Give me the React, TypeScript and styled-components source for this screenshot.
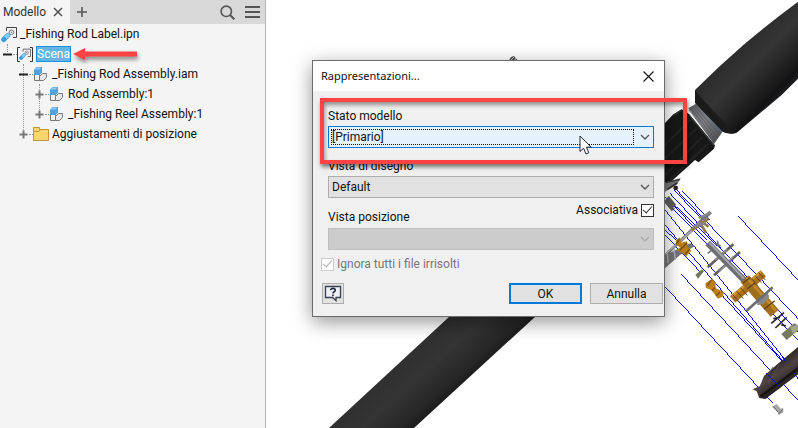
import React from "react";
import styled, { createGlobalStyle, css } from "styled-components";

const GlobalStyle = createGlobalStyle`
  *, *::before, *::after { box-sizing: border-box; }
  body { margin: 0; background: #fff; }
  body, button, select, input {
    font-family: Roboto, "Noto Sans", sans-serif;
    font-size: 12px;
    line-height: 16px;
    color: #111;
  }
  button, select { margin: 0; padding: 0; }
`;

const Page = styled.div`
  display: grid;
  grid-template-columns: 266px 1fr;
  min-height: 100vh;
  overflow: hidden;
`;

const Sidebar = styled.aside`
  background: #f4f4f4;
  border-right: 1px solid #b4b4b4;
`;

const TabBar = styled.header`
  display: flex;
  align-items: center;
  height: 24px;
  background: #d9d9d9;
`;

const Tab = styled.div`
  display: flex;
  align-items: center;
  justify-content: space-between;
  align-self: stretch;
  width: 70px;
  padding: 0 7px 0 3px;
  background: #f4f4f4;
  color: #333;
`;

const IconButton = styled.button`
  display: flex;
  border: 0;
  background: none;
  color: #555;
`;

const BarTools = styled.div`
  display: flex;
  flex: 1;
  align-items: center;
  gap: 10px;
  padding: 0 5px 0 7px;

  & > :nth-child(2) { margin-left: auto; }
`;

const Tree = styled.ul`
  margin: 0;
  padding: 0;
  list-style: none;
`;

const Branch = styled.ul<{ $root?: boolean }>`
  position: relative;
  margin: 0;
  padding: 0 0 0 ${(p) => (p.$root ? "0" : "16px")};
  list-style: none;

  &::before {
    content: "";
    position: absolute;
    top: 0;
    left: ${(p) => (p.$root ? "7px" : "23px")};
    ${(p) => (p.$root ? "height: 8px;" : "bottom: 10px;")}
    border-left: 1px dotted #999;
  }
`;

const Row = styled.div`
  display: flex;
  align-items: center;
  height: 20px;
  white-space: nowrap;
`;

const RootRow = styled(Row)`
  gap: 2px;
  padding-left: 1px;
`;

const Expander = styled.button`
  position: relative;
  display: flex;
  width: 13px;
  padding-left: 3px;
  border: 0;
  background: none;
`;

const Link = styled.span`
  width: 4px;
  border-top: 1px dotted #999;
`;

const Glyph = styled.span`
  display: flex;
  width: 17px;
  margin-right: 2px;
`;

const Name = styled.span<{ $selected?: boolean }>`
  ${(p) =>
    p.$selected &&
    css`
      margin-right: 1px;
      border: 1px solid #1c92dc;
      background: #62b5e5;
      color: #fff;
      line-height: 14px;
    `}
`;

const Pointer = styled.svg`
  overflow: visible;
  filter: drop-shadow(1px 3px 2px rgba(0, 0, 0, 0.45));
`;

const Canvas = styled.main`
  position: relative;
  overflow: hidden;
  background: #fff;
`;

const Scene = styled.svg`
  position: absolute;
  top: 0;
  left: 0;
  width: 100%;
  height: 100%;
`;

const Dialog = styled.section`
  position: absolute;
  top: 60px;
  left: 46px;
  width: 353px;
  border: 1px solid #6c6c6c;
  background: #f0f0f0;
  box-shadow: 0 5px 18px rgba(0, 0, 0, 0.42);
`;

const TitleBar = styled.header`
  display: flex;
  align-items: center;
  justify-content: space-between;
  height: 30px;
  padding: 0 10px 0 8px;
  background: #fff;
`;

const Title = styled.h1`
  margin: 0;
  font-family: "Noto Sans", "Open Sans", sans-serif;
  font-size: 11px;
  font-weight: 400;
  line-height: 16px;
`;

const Body = styled.form`
  display: flex;
  flex-direction: column;
  padding: 15px 10px 12px 15px;
`;

const Label = styled.label`
  line-height: 20px;
`;

const SelectBox = styled.div<{ $focused?: boolean; $disabled?: boolean }>`
  position: relative;
  display: flex;
  margin-bottom: ${(p) => (p.$focused ? "8px" : "0")};
  color: ${(p) => (p.$disabled ? "#aaa" : "#555")};

  ${(p) =>
    p.$focused &&
    css`
      &::after {
        content: "";
        position: absolute;
        inset: 3px 20px 3px 3px;
        border: 1px dotted #111;
        pointer-events: none;
      }
    `}

  & > svg {
    position: absolute;
    top: 8px;
    right: 4px;
    pointer-events: none;
  }
`;

const Select = styled.select<{ $focused?: boolean }>`
  appearance: none;
  width: 100%;
  height: 22px;
  padding: 0 22px 0 3px;
  border: 1px solid ${(p) => (p.$focused ? "#0078d7" : "#adadad")};
  border-radius: 0;
  outline: 0;
  background: ${(p) => (p.$focused ? "#e5f1fb" : "#e1e1e1")};
  color: #111;

  &:disabled {
    border-color: #bfbfbf;
    background: #ccc;
    opacity: 1;
  }
`;

const SplitRow = styled.div`
  display: flex;
  justify-content: space-between;
  align-items: flex-end;
  height: 30px;
  padding-bottom: 1px;
`;

const CheckLabel = styled.label<{ $muted?: boolean }>`
  display: flex;
  align-items: center;
  align-self: flex-start;
  gap: 3px;
  margin: ${(p) => (p.$muted ? "6px 0 0 -7px" : "4px 0 0")};
  color: ${(p) => (p.$muted ? "#777" : "#111")};
`;

const Check = styled.input<{ $muted?: boolean }>`
  appearance: none;
  display: grid;
  place-items: center;
  width: 13px;
  height: 13px;
  margin: 0;
  border: 1px solid ${(p) => (p.$muted ? "#ccc" : "#333")};
  background: #fff;

  &:checked::before {
    content: "";
    width: 9px;
    height: 5px;
    margin-top: -3px;
    border: solid ${(p) => (p.$muted ? "#aaa" : "#333")};
    border-width: 0 0 1px 1px;
    transform: rotate(-48deg);
  }
`;

const Footer = styled.footer`
  display: flex;
  gap: 8px;
  margin: 11px -9px 0 -6px;
`;

const Button = styled.button<{ $primary?: boolean }>`
  width: 73px;
  height: 21px;
  border: ${(p) => (p.$primary ? "2px solid #0078d7" : "1px solid #adadad")};
  background: #e1e1e1;
`;

const HelpButton = styled(Button)`
  display: grid;
  place-items: center;
  width: 22px;
  margin-right: auto;
`;

const Highlight = styled.div`
  position: absolute;
  top: 37px;
  left: 7px;
  width: 367px;
  height: 66px;
  border: 4px solid #fb4343;
  box-shadow: 1px 3px 4px rgba(0, 0, 0, 0.5), inset 1px 3px 4px rgba(0, 0, 0, 0.4);
  pointer-events: none;
`;

const Cursor = styled.svg`
  position: absolute;
  top: 74px;
  left: 266px;
  pointer-events: none;
`;

const Sign = ({ open }: { open?: boolean }) => (
  <svg width="9" height="9" viewBox="0 0 9 9">
    <path
      d={open ? "M0 4.5H9" : "M0.5 4.5H8.5M4.5 0.5V8.5"}
      stroke={open ? "#222" : "#777"}
      strokeWidth="2"
    />
  </svg>
);

const PresentationGlyph = ({ small }: { small?: boolean }) => (
  <svg width="17" height="17" viewBox="0 0 17 17" fill="none">
    {small && <path d="M3 1.5H0.5V15.5H3M13 1.5H15.5V15.5H13" stroke="#333" />}
    <g transform={small ? "translate(2 2) scale(0.74)" : undefined}>
      <path d="M5.5 5V1.5H15.5V11.5H12" stroke="#444" />
      <circle cx="10.5" cy="6.3" r="2.3" stroke="#777" />
      <circle cx="10.5" cy="6.3" r="0.8" fill="#777" />
      <path d="M2.7 13.6L7 9.3" stroke="#4fa6de" strokeWidth="5" strokeLinecap="round" />
      <path d="M2.7 13.6L7 9.3" stroke="#8acbf3" strokeWidth="3.4" strokeLinecap="round" />
      <circle cx="3" cy="13.4" r="2.4" fill="#3a9ad9" />
    </g>
  </svg>
);

const AssemblyGlyph = () => (
  <svg width="15" height="16" viewBox="0 0 15 16" strokeLinejoin="round">
    <path d="M1.5 8.5H6.5V14.5H1.5Z" fill="#eee" stroke="#777" />
    <path d="M6.5 10.5L9.5 7.5H13.5V11.5L10.5 14.5H6.5Z" fill="#e8e8e8" stroke="#777" />
    <path d="M1 3.5L3.5 1H9V6.5L6.5 9H1Z" fill="#4ca5df" />
    <path d="M1.5 3.5L3.5 1.5H8.5L6.5 3.5Z" fill="#8dcbf2" />
  </svg>
);

const FolderGlyph = () => (
  <svg width="17" height="16" viewBox="0 0 17 16">
    <path d="M0.5 14.5V1.5H6.5V3.5H15.5V14.5Z" fill="#f8d66d" stroke="#bd963e" />
    <path d="M1 5.5H6L7.5 3.5" fill="none" stroke="#bd963e" />
  </svg>
);

const Chevron = () => (
  <svg width="10" height="7" viewBox="0 0 10 7" fill="none">
    <path d="M1 1L5 5L9 1" stroke="currentColor" strokeWidth="1.3" />
  </svg>
);

type NodeProps = {
  name: string;
  glyph: React.ReactNode;
  open?: boolean;
  selected?: boolean;
  children?: React.ReactNode;
};

const TreeNode = ({ name, glyph, open, selected, children }: NodeProps) => (
  <li>
    <Row>
      <Expander type="button" aria-label={name} aria-expanded={!!open}>
        <Sign open={open} />
      </Expander>
      <Link />
      <Glyph>{glyph}</Glyph>
      <Name $selected={selected}>{name}</Name>
      {selected && (
        <Pointer width="66" height="14" viewBox="0 0 66 14">
          <path d="M1 7L13 1V4.5H65V9.5H13V13Z" fill="#fb4343" />
        </Pointer>
      )}
    </Row>
    {children}
  </li>
);

const explodeLines = [
  "M75 0L478 425", "M90 -20L478 400", "M110 -30L478 360", "M125 -28L210 60",
  "M75 30L440 485", "M75 75L435 490", "M75 105L180 215", "M75 90L130 140",
  "M123 222L478 605", "M75 260L400 610", "M294 48L478 244",
  "M75 -10L200 120", "M245 285L478 540", "M82 -5L240 145", "M102 -30L190 62",
];

const RodScene = () => (
  <Scene viewBox="266 0 532 428" preserveAspectRatio="xMinYMin slice" aria-hidden="true">
    <defs>
      <linearGradient id="rod" gradientUnits="userSpaceOnUse" x1="390" y1="372" x2="442" y2="430">
        <stop offset="0" stopColor="#303031" />
        <stop offset="0.3" stopColor="#343435" />
        <stop offset="0.62" stopColor="#262627" />
        <stop offset="0.82" stopColor="#161617" />
        <stop offset="1" stopColor="#232328" />
      </linearGradient>
      <linearGradient id="grip" gradientUnits="userSpaceOnUse" x1="230" y1="200" x2="375" y2="345">
        <stop offset="0" stopColor="#2b2b2b" />
        <stop offset="0.35" stopColor="#353535" />
        <stop offset="0.7" stopColor="#202020" />
        <stop offset="0.88" stopColor="#121213" />
        <stop offset="1" stopColor="#25252a" />
      </linearGradient>
      <linearGradient id="thread" x1="0" y1="0" x2="1" y2="1">
        <stop offset="0" stopColor="#56575a" />
        <stop offset="0.45" stopColor="#808185" />
        <stop offset="1" stopColor="#414246" />
      </linearGradient>
      <linearGradient id="reel" gradientUnits="userSpaceOnUse" x1="395" y1="495" x2="440" y2="560">
        <stop offset="0" stopColor="#2d2726" />
        <stop offset="0.4" stopColor="#4c4341" />
        <stop offset="0.75" stopColor="#332b2b" />
        <stop offset="1" stopColor="#1a1516" />
      </linearGradient>
    </defs>

    <path d="M450 316L329 428H414L536 316Z" fill="url(#rod)" />
    <path d="M508 62L511 57L514 56L519 62Z" fill="#555" />
    <path d="M510 61L514 57M514 61L516 58" stroke="#bbb" />

    <g transform="translate(640 0) scale(0.33333)">
      <path d="M145 325L170 310L247 396L222 432Z" fill="url(#thread)" />
      <path
        d="M150 321L228 422M156 318L234 414M162 315L240 406M147 330L220 426"
        stroke="#4b4c50"
        strokeWidth="2"
      />
      <path d="M172 314L246 394" stroke="#356799" strokeWidth="3" />
      <path d="M60 385L98 345L125 328L147 342L225 436L222 446L176 487L165 480L92 546L60 560Z" fill="#171717" />
      <path
        d="M150 360L60 450M170 385L75 475M188 410L75 525M205 430L90 540"
        stroke="#242424"
        strokeWidth="5"
      />
      <path d="M147 345L222 437M98 347L125 330" stroke="#333" strokeWidth="4" />
      <path
        d="M165 270Q235 200 310 135Q390 67 478 2V232L425 285L290 398Q275 405 250 396L165 308Z"
        fill="url(#grip)"
      />
      <path d="M165 272L250 365L282 400Q262 402 248 395L165 308Z" fill="#1b1b1b" />
    </g>

    <g transform="translate(640 200) scale(0.33333)">
      <g stroke="#0808ee" strokeWidth="3" fill="none" shapeRendering="crispEdges">
        {explodeLines.map((d) => (
          <path key={d} d={d} />
        ))}
      </g>
      <path d="M72 -52L122 -65L110 -45L75 -25Z" fill="#777" />
      <path d="M78 -52L120 -62M82 -32L112 -52" stroke="#333" strokeWidth="4" />
      <circle cx="107" cy="-36" r="7" fill="#222" />
      <path d="M75 0L100 30M82 -8L104 18" stroke="#5e5e5e" strokeWidth="12" />
      <path d="M66 170L208 32L216 40L150 102L90 158L150 130L165 138L120 165L75 205Z" fill="#747474" />
      <path d="M76 163L190 60M82 152L84 188M101 140L106 180" stroke="#b4b4b4" strokeWidth="4" />
      <path d="M155 92L206 56M180 62L206 80M184 75L198 98" stroke="#92794b" strokeWidth="8" />
      <path d="M176 54L212 38M160 80L194 70" stroke="#888" strokeWidth="7" />
      <path d="M108 120L120 112L124 128L140 124L142 140L154 152L138 170L126 158L112 152L120 142L108 134Z" fill="#b77d18" />
      <path d="M118 118L108 132M142 128L120 150M148 148L134 164" stroke="#6e4b13" strokeWidth="4" />
      <path d="M166 224L186 208L192 214L174 236Z" fill="#747660" />
      <path d="M203 202L280 133M222 226L300 156" stroke="#5f6061" strokeWidth="8" />
      <path d="M226 180L262 148M238 214L280 170" stroke="#8f8f8f" strokeWidth="5" />
      <path d="M203 129L312 240" stroke="#6d6f72" strokeWidth="19" />
      <path d="M208 128L312 236" stroke="#a5a7aa" strokeWidth="6" />
      <path d="M203 160L216 150M232 122L236 140M224 130L242 138" stroke="#777" strokeWidth="5" />
      <path d="M196 250L216 236L228 248L226 264L252 276L248 290L234 296L214 270L198 264Z" fill="#bd8118" />
      <path d="M214 240L202 258M226 262L216 272M240 276L228 288" stroke="#75501a" strokeWidth="4" />
      <path d="M278 298L370 220" stroke="#a87116" strokeWidth="25" />
      <path d="M276 290L364 214" stroke="#d0932e" strokeWidth="7" />
      <path
        d="M278 284L298 306M290 274L310 296M302 264L322 286M336 236L354 258M346 228L364 248M356 218L376 240"
        stroke="#5e421a"
        strokeWidth="3"
      />
      <path d="M314 236L404 340" stroke="#9f6d1b" strokeWidth="32" />
      <path d="M320 232L408 332" stroke="#c4892a" strokeWidth="8" />
      <path d="M308 250L332 232M322 266L346 248M372 328L404 302" stroke="#5e421a" strokeWidth="4" />
      <path d="M352 300L382 276L388 290L370 312L352 316Z" fill="#85888d" />
      <path d="M319 333L398 262" stroke="#6c6e70" strokeWidth="8" />
      <path d="M394 370L432 338M406 384L440 352M400 356L420 352M424 374L438 378" stroke="#282828" strokeWidth="5" />
      <path d="M424 402L462 370L478 378V388L440 420Z" fill="#777a68" />
      <path d="M450 382L472 374L476 386L460 402Z" fill="#a3a591" />
      <path d="M338 568L360 558L372 528L410 494L478 438V510L420 564L376 597L358 594L350 574Z" fill="url(#reel)" />
      <path d="M362 556L400 500M384 550L420 492" stroke="#5b504e" strokeWidth="4" opacity="0.6" />
      <path d="M362 590L478 502" stroke="#171313" strokeWidth="8" />
      <path d="M408 566L478 514" stroke="#2c2525" strokeWidth="10" />
      <path
        d="M380 520L416 558M425 470L438 485M462 520L478 538"
        stroke="#0808ee"
        strokeWidth="3"
        shapeRendering="crispEdges"
      />
      <path d="M396 620L410 612L422 626L430 624V636L416 646L412 634Z" fill="#a6a6a6" />
      <path d="M400 620L414 636M428 628L416 642" stroke="#666" strokeWidth="3" />
    </g>
  </Scene>
);

export default function App() {
  return (
    <>
      <GlobalStyle />
      <Page>
        <Sidebar>
          <TabBar>
            <Tab>
              Modello
              <IconButton type="button" aria-label="Chiudi scheda">
                <svg width="10" height="10" viewBox="0 0 10 10">
                  <path d="M1 1L9 9M9 1L1 9" stroke="currentColor" strokeWidth="1.6" />
                </svg>
              </IconButton>
            </Tab>
            <BarTools>
              <IconButton type="button" aria-label="Aggiungi scheda">
                <svg width="10" height="10" viewBox="0 0 10 10">
                  <path d="M0 5H10M5 0V10" stroke="currentColor" strokeWidth="1.6" />
                </svg>
              </IconButton>
              <IconButton type="button" aria-label="Cerca">
                <svg width="15" height="15" viewBox="0 0 15 15" fill="none">
                  <circle cx="6.3" cy="6.3" r="5.2" stroke="currentColor" strokeWidth="1.6" />
                  <path d="M10 10L14.3 14.3" stroke="currentColor" strokeWidth="2" />
                </svg>
              </IconButton>
              <IconButton type="button" aria-label="Menu">
                <svg width="15" height="12" viewBox="0 0 15 12">
                  <path d="M0 1H15M0 6H15M0 11H15" stroke="currentColor" strokeWidth="2" />
                </svg>
              </IconButton>
            </BarTools>
          </TabBar>
          <Tree>
            <li>
              <RootRow>
                <PresentationGlyph />
                <Name>_Fishing Rod Label.ipn</Name>
              </RootRow>
              <Branch $root>
                <TreeNode name="Scena" glyph={<PresentationGlyph small />} open selected>
                  <Branch>
                    <TreeNode name="_Fishing Rod Assembly.iam" glyph={<AssemblyGlyph />} open>
                      <Branch>
                        <TreeNode name="Rod Assembly:1" glyph={<AssemblyGlyph />} />
                        <TreeNode name="_Fishing Reel Assembly:1" glyph={<AssemblyGlyph />} />
                      </Branch>
                    </TreeNode>
                    <TreeNode name="Aggiustamenti di posizione" glyph={<FolderGlyph />} />
                  </Branch>
                </TreeNode>
              </Branch>
            </li>
          </Tree>
        </Sidebar>

        <Canvas>
          <RodScene />
          <Dialog role="dialog" aria-labelledby="dialog-title">
            <TitleBar>
              <Title id="dialog-title">Rappresentazioni...</Title>
              <IconButton type="button" aria-label="Chiudi">
                <svg width="11" height="11" viewBox="0 0 11 11">
                  <path d="M0.5 0.5L10.5 10.5M10.5 0.5L0.5 10.5" stroke="#111" strokeWidth="1.1" />
                </svg>
              </IconButton>
            </TitleBar>
            <Body onSubmit={(e) => e.preventDefault()}>
              <Label htmlFor="model-state">Stato modello</Label>
              <SelectBox $focused>
                <Select id="model-state" $focused>
                  <option>[Primario]</option>
                </Select>
                <Chevron />
              </SelectBox>
              <Label htmlFor="design-view">Vista di disegno</Label>
              <SelectBox>
                <Select id="design-view">
                  <option>Default</option>
                </Select>
                <Chevron />
              </SelectBox>
              <SplitRow>
                <Label htmlFor="position-view">Vista posizione</Label>
                <CheckLabel>
                  Associativa
                  <Check type="checkbox" defaultChecked />
                </CheckLabel>
              </SplitRow>
              <SelectBox $disabled>
                <Select id="position-view" disabled />
                <Chevron />
              </SelectBox>
              <CheckLabel $muted>
                <Check type="checkbox" defaultChecked disabled $muted />
                Ignora tutti i file irrisolti
              </CheckLabel>
              <Footer>
                <HelpButton type="button" aria-label="Guida">
                  <svg width="18" height="17" viewBox="0 0 18 17">
                    <path d="M1.5 1.5H16.5V12.5H12V15.5L8.5 12.5H1.5Z" fill="#eef0f6" stroke="#3b4150" strokeWidth="1.3" />
                    <path d="M6.7 5.2Q6.9 3.4 9 3.4Q11.2 3.4 11.2 5.2Q11.2 6.4 9.9 7Q9 7.4 9 8.6M9 9.6V11.2" fill="none" stroke="#222a3c" strokeWidth="1.6" />
                  </svg>
                </HelpButton>
                <Button type="submit" $primary>OK</Button>
                <Button type="button">Annulla</Button>
              </Footer>
            </Body>
            <Highlight />
            <Cursor width="14" height="21" viewBox="0 0 14 21">
              <path
                d="M1 1V16.5L4.6 13.2L7 19L9.8 17.8L7.4 12.2H12.2Z"
                fill="#fff"
                stroke="#20263a"
              />
            </Cursor>
          </Dialog>
        </Canvas>
      </Page>
    </>
  );
}
